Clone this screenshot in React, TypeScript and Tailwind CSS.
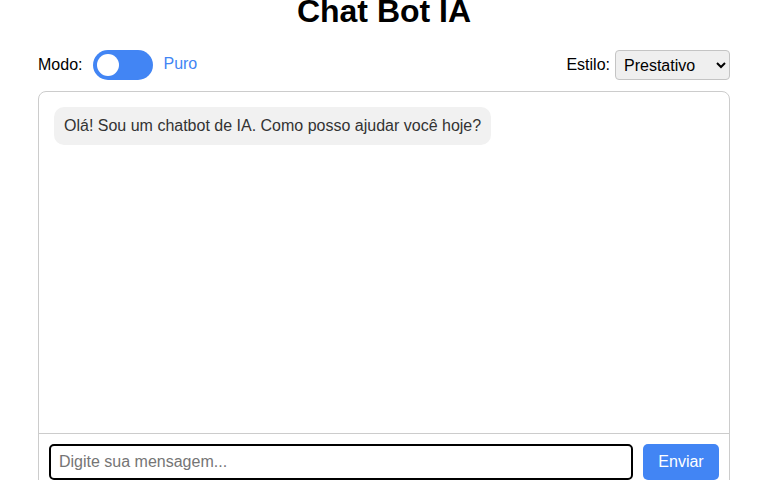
import React from "react";

export default function App() {
  return (
    <div className="w-[768px] h-[480px] overflow-hidden bg-white text-black" style={{ fontFamily: '"Liberation Sans", Arial, sans-serif' }}>
      <div className="w-[692px] mx-auto">
        <h1 className="text-[32px] leading-[37px] font-bold text-center mt-[-7px] mb-[20px]">Chat Bot IA</h1>
        <div className="flex items-center justify-between h-[30px] mb-[11px]">
          <div className="flex items-center text-[16px]">
            <span>Modo:</span>
            <div className="ml-[11px] w-[60px] h-[30px] rounded-full bg-[#4285f4] flex items-center px-[4px]">
              <div className="w-[22px] h-[22px] rounded-full bg-white" />
            </div>
            <span className="ml-[10px] text-[#4285f4] mt-[-2px]">Puro</span>
          </div>
          <div className="flex items-center text-[16px]">
            <span className="mr-[5px]">Estilo:</span>
            <select
              defaultValue="Prestativo"
              className="w-[115px] h-[30px] bg-[#efefef] border border-[#c4c4c4] rounded-[4px] pl-[4px] pr-[2px] text-[16px]"
            >
              <option>Prestativo</option>
              <option>Engraçado</option>
              <option>Sério</option>
            </select>
          </div>
        </div>
        <div className="h-[400px] border border-[#cccccc] rounded-[8px] flex flex-col">
          <div className="flex-1 p-[15px]">
            <div className="inline-block bg-[#f1f1f1] text-[#333333] rounded-[10px] px-[10px] py-[10px] text-[16px] leading-[18px]">
              Olá! Sou um chatbot de IA. Como posso ajudar você hoje?
            </div>
          </div>
          <div className="border-t border-[#cccccc] p-[10px] flex gap-[10px]">
            <input
              placeholder="Digite sua mensagem..."
              className="flex-1 h-[36px] border-2 border-black rounded-[5px] px-[8px] text-[16px] placeholder:text-[#757575] outline-none"
            />
            <button className="w-[76px] h-[36px] bg-[#4285f4] text-white rounded-[5px] text-[16px]">Enviar</button>
          </div>
        </div>
      </div>
    </div>
  );
}
